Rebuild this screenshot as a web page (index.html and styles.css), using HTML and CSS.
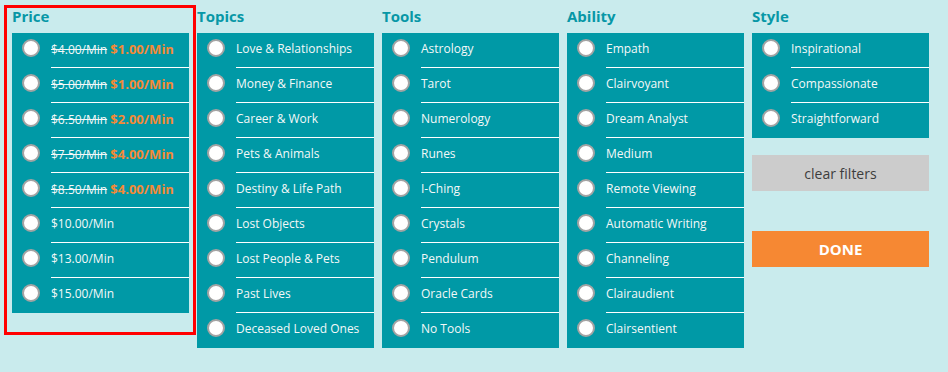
FILE: index.html
```html
<!DOCTYPE html>
<html lang="en">
<head>
    <meta charset="UTF-8">
    <title>Filters</title>
    <link rel="stylesheet" href="styles.css">
</head>
<body>

<section class="filters">
    <!-- Price -->
    <div class="filter-col active">
        <h3>Price</h3>
        <div class="panel">
            <label class="option"><span class="radio"></span><span class="text"><s>$4.00/Min</s> <b>$1.00/Min</b></span></label>
            <label class="option"><span class="radio"></span><span class="text"><s>$5.00/Min</s> <b>$1.00/Min</b></span></label>
            <label class="option"><span class="radio"></span><span class="text"><s>$6.50/Min</s> <b>$2.00/Min</b></span></label>
            <label class="option"><span class="radio"></span><span class="text"><s>$7.50/Min</s> <b>$4.00/Min</b></span></label>
            <label class="option"><span class="radio"></span><span class="text"><s>$8.50/Min</s> <b>$4.00/Min</b></span></label>
            <label class="option"><span class="radio"></span><span class="text">$10.00/Min</span></label>
            <label class="option"><span class="radio"></span><span class="text">$13.00/Min</span></label>
            <label class="option"><span class="radio"></span><span class="text">$15.00/Min</span></label>
        </div>
    </div>

    <!-- Topics -->
    <div class="filter-col">
        <h3>Topics</h3>
        <div class="panel">
            <label class="option"><span class="radio"></span><span class="text">Love &amp; Relationships</span></label>
            <label class="option"><span class="radio"></span><span class="text">Money &amp; Finance</span></label>
            <label class="option"><span class="radio"></span><span class="text">Career &amp; Work</span></label>
            <label class="option"><span class="radio"></span><span class="text">Pets &amp; Animals</span></label>
            <label class="option"><span class="radio"></span><span class="text">Destiny &amp; Life Path</span></label>
            <label class="option"><span class="radio"></span><span class="text">Lost Objects</span></label>
            <label class="option"><span class="radio"></span><span class="text">Lost People &amp; Pets</span></label>
            <label class="option"><span class="radio"></span><span class="text">Past Lives</span></label>
            <label class="option"><span class="radio"></span><span class="text">Deceased Loved Ones</span></label>
        </div>
    </div>

    <!-- Tools -->
    <div class="filter-col">
        <h3>Tools</h3>
        <div class="panel">
            <label class="option"><span class="radio"></span><span class="text">Astrology</span></label>
            <label class="option"><span class="radio"></span><span class="text">Tarot</span></label>
            <label class="option"><span class="radio"></span><span class="text">Numerology</span></label>
            <label class="option"><span class="radio"></span><span class="text">Runes</span></label>
            <label class="option"><span class="radio"></span><span class="text">I-Ching</span></label>
            <label class="option"><span class="radio"></span><span class="text">Crystals</span></label>
            <label class="option"><span class="radio"></span><span class="text">Pendulum</span></label>
            <label class="option"><span class="radio"></span><span class="text">Oracle Cards</span></label>
            <label class="option"><span class="radio"></span><span class="text">No Tools</span></label>
        </div>
    </div>

    <!-- Ability -->
    <div class="filter-col">
        <h3>Ability</h3>
        <div class="panel">
            <label class="option"><span class="radio"></span><span class="text">Empath</span></label>
            <label class="option"><span class="radio"></span><span class="text">Clairvoyant</span></label>
            <label class="option"><span class="radio"></span><span class="text">Dream Analyst</span></label>
            <label class="option"><span class="radio"></span><span class="text">Medium</span></label>
            <label class="option"><span class="radio"></span><span class="text">Remote Viewing</span></label>
            <label class="option"><span class="radio"></span><span class="text">Automatic Writing</span></label>
            <label class="option"><span class="radio"></span><span class="text">Channeling</span></label>
            <label class="option"><span class="radio"></span><span class="text">Clairaudient</span></label>
            <label class="option"><span class="radio"></span><span class="text">Clairsentient</span></label>
        </div>
    </div>

    <!-- Style + buttons -->
    <div class="filter-col">
        <h3>Style</h3>
        <div class="panel">
            <label class="option"><span class="radio"></span><span class="text">Inspirational</span></label>
            <label class="option"><span class="radio"></span><span class="text">Compassionate</span></label>
            <label class="option"><span class="radio"></span><span class="text">Straightforward</span></label>
        </div>
        <button class="clear-btn">clear filters</button>
        <button class="done-btn">DONE</button>
    </div>
</section>

</body>
</html>
```

FILE: styles.css
```css
body {
    margin: 0;
    padding: 0;
    background-color: #c9ebed;
    font-family: 'Open Sans', 'Noto Sans', sans-serif;
}

.filters {
    display: flex;
    align-items: flex-start;
    gap: 8px;
    padding: 6px 0 0 12px;
}

.filter-col {
    width: 177px;
    display: flex;
    flex-direction: column;
}

/* red frame round the selected column */
.filter-col.active {
    position: relative;
}

.filter-col.active::after {
    content: "";
    position: absolute;
    top: -1px;
    left: -8px;
    right: -7px;
    bottom: -22px;
    border: 3px solid #ff0000;
    pointer-events: none;
}

.filter-col h3 {
    margin: 0 0 6px;
    font-size: 15px;
    line-height: 21px;
    font-weight: bold;
    color: #0797a6;
}

.panel {
    background-color: #0099a6;
}

.option {
    display: flex;
    align-items: flex-start;
    height: 35px;
    padding-left: 10px;
    cursor: pointer;
}

.radio {
    width: 14px;
    height: 14px;
    margin-top: 6px;
    border: 2px solid #a3a3a3;
    border-radius: 50%;
    background-color: #ffffff;
    flex-shrink: 0;
    margin-right: 11px;
}

.text {
    flex: 1;
    height: 34px;
    line-height: 32px;
    border-bottom: 1px solid #ffffff;
    color: #f4f8f8;
    font-size: 12px;
    white-space: nowrap;
}

.option:last-child .text {
    border-bottom-color: transparent;
}

.text s {
    color: #f4f8f8;
}

.text b {
    color: #f48a36;
    font-size: 13px;
}

.clear-btn {
    margin-top: 17px;
    height: 36px;
    border: none;
    background-color: #cccccc;
    color: #3d3d3d;
    font-family: inherit;
    font-size: 14px;
    cursor: pointer;
}

.done-btn {
    margin-top: 40px;
    height: 36px;
    border: none;
    background-color: #f68833;
    color: #ffffff;
    font-family: inherit;
    font-size: 15px;
    font-weight: bold;
    cursor: pointer;
}
```
